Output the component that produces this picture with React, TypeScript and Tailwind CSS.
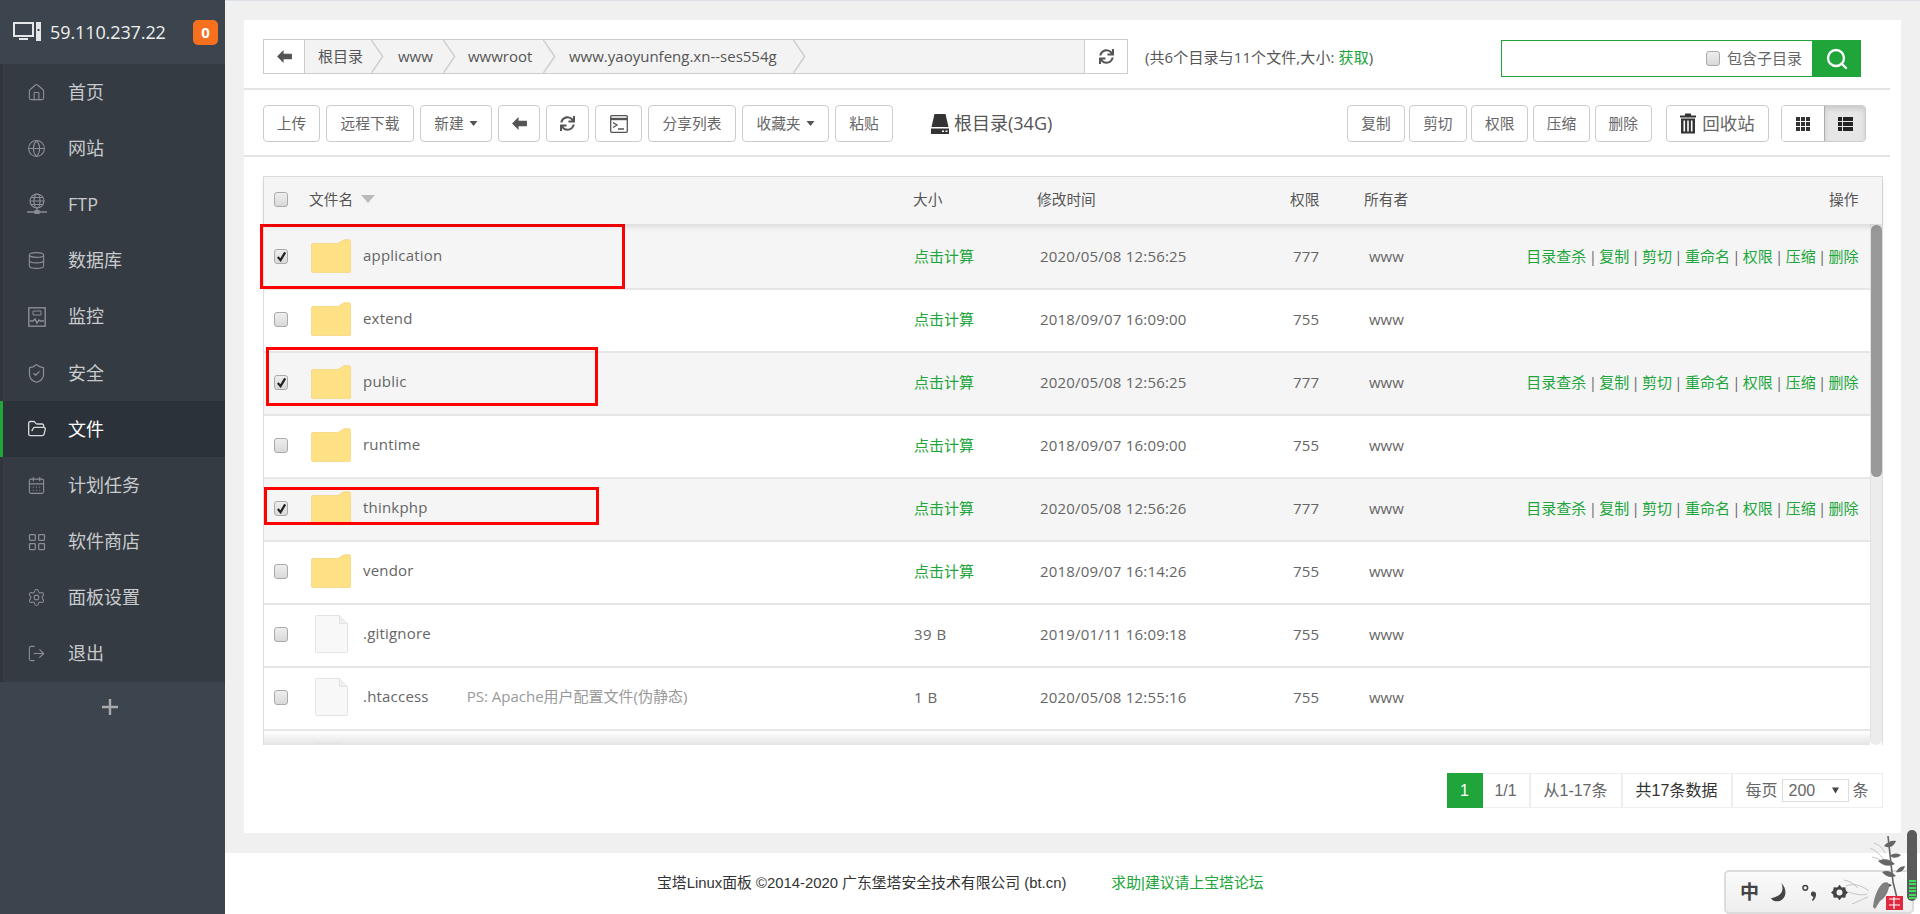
import React from "react";
import { House, Globe, Database, ShieldCheck, FolderOpen, CalendarDays, LayoutGrid, Settings, LogOut, Search } from "lucide-react";
import { FaSync } from "react-icons/fa";

const FONT = { fontFamily: '"Open Sans","Noto Sans CJK SC",sans-serif' };
const ARIAL = { fontFamily: '"Liberation Sans","Noto Sans CJK SC",sans-serif' };

function ArrowLeft({ className }: { className?: string }) {
  return (
    <svg viewBox="0 0 16 14" className={className} fill="#555">
      <path d="M0 7 7 0v4h9v6H7v4z" />
    </svg>
  );
}
function Caret() {
  return (
    <svg viewBox="0 0 8 5" className="w-[9px] h-[5px] ml-[5px]" fill="#555">
      <path d="M0 0h8L4 5z" />
    </svg>
  );
}
function Chevron() {
  return (
    <svg viewBox="0 0 13 35" className="w-[13px] h-[33px] shrink-0" fill="none" stroke="#cfcfcf" strokeWidth="1.6">
      <path d="M0 0 12 17.5 0 35" />
    </svg>
  );
}
function Check({ on }: { on?: boolean }) {
  return (
    <div className="w-[14px] h-[15px] rounded-[3px] border border-[#aaa] bg-gradient-to-b from-[#eee] to-[#d9d9d9] flex items-center justify-center shrink-0">
      {on && (
        <svg viewBox="0 0 12 12" className="w-[11px] h-[11px]" fill="none" stroke="#222" strokeWidth="2.4">
          <path d="M2 6.5 5 10 10 1.5" />
        </svg>
      )}
    </div>
  );
}
function Folder() {
  return (
    <svg viewBox="0 0 40 34" className="w-[40px] h-[34px]">
      <path d="M2 4.5h25L33 .8h5a1.6 1.6 0 0 1 1.6 1.6v29.6a1.6 1.6 0 0 1-1.6 1.6H2A1.6 1.6 0 0 1 .4 32V6a1.6 1.6 0 0 1 1.6-1.5z" fill="#fee085" stroke="#f5d47c" strokeWidth=".8" />
    </svg>
  );
}
function FileIcon() {
  return (
    <svg viewBox="0 0 33 38" className="w-[33px] h-[38px]">
      <path d="M1.5.5h23l8 8v28a1 1 0 0 1-1 1h-30a1 1 0 0 1-1-1v-35a1 1 0 0 1 1-1z" fill="#f8f8f8" stroke="#e3e3e3" />
      <path d="M24.5.5v8h8" fill="#efefef" stroke="#e3e3e3" />
    </svg>
  );
}
function FtpIcon() {
  return (
    <svg viewBox="0 0 20 22" className="w-[20px] h-[22px]" fill="none" stroke="#8a8f94" strokeWidth="1.2">
      <circle cx="10" cy="8" r="7" />
      <ellipse cx="10" cy="8" rx="3" ry="7" />
      <path d="M3 8h14M4 4.5h12M4 11.5h12M10 15v3" />
      <path d="M0 19h8M12 19h8" strokeWidth="1.6" />
      <rect x="8" y="17.6" width="4" height="2.8" fill="#8a8f94" />
    </svg>
  );
}
function MonitorIcon() {
  return (
    <svg viewBox="0 0 18 20" className="w-[18px] h-[20px]" fill="none" stroke="#8a8f94" strokeWidth="1.4">
      <rect x=".8" y=".8" width="16.4" height="18.4" />
      <path d="M2 14h3l2-2 2 4 2-3 1.5 1H16" />
      <path d="M5 4h8v4H5z" strokeWidth="1" />
    </svg>
  );
}

const nav: [string, React.ReactNode][] = [
  ["首页", <House size={19} strokeWidth={1.4} color="#8a8f94" />],
  ["网站", <Globe size={19} strokeWidth={1.3} color="#8a8f94" />],
  ["FTP", <FtpIcon />],
  ["数据库", <Database size={19} strokeWidth={1.4} color="#8a8f94" />],
  ["监控", <MonitorIcon />],
  ["安全", <ShieldCheck size={21} strokeWidth={1.4} color="#8a8f94" />],
  ["文件", <FolderOpen size={20} strokeWidth={1.6} color="#d8d8d8" />],
  ["计划任务", <CalendarDays size={19} strokeWidth={1.4} color="#8a8f94" />],
  ["软件商店", <LayoutGrid size={20} strokeWidth={1.5} color="#8a8f94" />],
  ["面板设置", <Settings size={19} strokeWidth={1.3} color="#8a8f94" />],
  ["退出", <LogOut size={19} strokeWidth={1.4} color="#8a8f94" />],
];

function Sidebar() {
  return (
    <aside className="w-[225px] shrink-0 h-full bg-[#3c444d] flex flex-col">
      <div className="h-[64px] flex items-center text-white pl-[13px]">
        <svg viewBox="0 0 28 22" className="w-[28px] h-[22px]" fill="#e4e6e8">
          <path d="M0 1h21v15H0zM2 3v11h17V3zM6 17h9v2H6zM23 1h5v19h-5zM24.5 8h2v2h-2z" fillRule="evenodd" />
        </svg>
        <span className="ml-[9px] text-[18px] tracking-[-0.1px] text-[#eee]">59.110.237.22</span>
        <span className="ml-auto mr-[7px] w-[25px] h-[25px] rounded-[5px] bg-[#f7701d] flex items-center justify-center font-bold text-[15px]">0</span>
      </div>
      <nav className="bg-[#343b43] h-[618px] flex flex-col">
        {nav.map(([label, icon]) => {
          const active = label === "文件";
          return (
            <div
              key={label}
              className={
                active
                  ? "h-[56.2px] flex items-center border-l-[3px] border-[#20a53a] bg-[#2c323a] text-white text-[18px]"
                  : "h-[56.2px] flex items-center border-l-[3px] border-[#2f353b] text-[#c8cacc] text-[18px]"
              }
            >
              <span className="w-[65px] flex justify-center pl-[22px] pr-[20px]">{icon}</span>
              <span>{label}</span>
            </div>
          );
        })}
      </nav>
      <div className="flex justify-center mt-[17px] pr-[6px] text-[#a0a4a8]">
        <svg viewBox="0 0 16 16" className="w-[16px] h-[16px]" fill="#aaa">
          <path d="M6.8 0h2.4v6.8H16v2.4H9.2V16H6.8V9.2H0V6.8h6.8z" />
        </svg>
      </div>
    </aside>
  );
}

const btn = "h-[37px] border border-[#ccc] rounded-[4px] bg-white flex items-center justify-center text-[14.7px] text-[#666] shrink-0";

function Breadcrumb() {
  return (
    <div className="w-[865px] h-[35px] border border-[#ccc] flex items-center bg-[#f3f3f3] text-[15px] text-[#555] whitespace-nowrap">
      <div className="w-[41px] h-full bg-white border-r border-[#ccc] flex items-center justify-center shrink-0">
        <ArrowLeft className="w-[15px] h-[13px]" />
      </div>
      <span className="ml-[13px] w-[45px]">根目录</span>
      <span className="ml-[8px]"><Chevron /></span>
      <span className="ml-[14px] w-[35px]">www</span>
      <span className="ml-[10px]"><Chevron /></span>
      <span className="ml-[12px] w-[66px]">wwwroot</span>
      <span className="ml-[9px]"><Chevron /></span>
      <span className="ml-[13px] w-[215px]">www.yaoyunfeng.xn--ses554g</span>
      <span className="ml-[9px]"><Chevron /></span>
      <div className="ml-auto w-[43px] h-full bg-white border-l border-[#ccc] flex items-center justify-center">
        <FaSync className="text-[#555] text-[15px]" />
      </div>
    </div>
  );
}

function SearchBox() {
  return (
    <div className="w-[360px] h-[37px] flex mt-[1px] ml-auto mr-[29px]">
      <div className="flex-1 border border-[#20a53a] flex items-center justify-end pr-[10px] text-[15px] text-[#666]">
        <Check />
        <span className="ml-[7px]">包含子目录</span>
      </div>
      <div className="w-[48px] bg-[#20a53a] flex items-center justify-center">
        <Search size={24} color="#fff" strokeWidth={2.3} />
      </div>
    </div>
  );
}

function Toolbar() {
  return (
    <div className="h-[67px] mr-[11px] border-b-2 border-[#e4e4e4] pl-[19px] pt-[15px] flex items-start gap-[6px]">
      <div className={`${btn} w-[57px]`}>上传</div>
      <div className={`${btn} w-[88px]`}>远程下载</div>
      <div className={`${btn} w-[72px]`}>新建<Caret /></div>
      <div className={`${btn} w-[42px]`}><ArrowLeft className="w-[15px] h-[13px]" /></div>
      <div className={`${btn} w-[43px]`}><FaSync className="text-[#555] text-[15px]" /></div>
      <div className={`${btn} w-[47px]`}>
        <svg viewBox="0 0 18 18" className="w-[18px] h-[18px]" fill="none" stroke="#555" strokeWidth="1.3">
          <rect x=".7" y=".7" width="16.6" height="16.6" rx="1" />
          <path d="M1 4h16" strokeWidth="2.4" />
          <path d="M3 7.5 7 10l-4 2.5M8 14h6" />
        </svg>
      </div>
      <div className={`${btn} w-[88px]`}>分享列表</div>
      <div className={`${btn} w-[87px]`}>收藏夹<Caret /></div>
      <div className={`${btn} w-[58px]`}>粘贴</div>
      <div className="ml-[32px] h-[37px] flex items-center text-[18px] text-[#555] whitespace-nowrap">
        <svg viewBox="0 0 18 20" className="w-[18px] h-[20px]" fill="#333">
          <path d="M3.5 0h11l3 13H.5zM0 14.5h18V20H0zM11 16.5v1.5h2v-1.5zM14.5 16.5v1.5h2v-1.5z" fillRule="evenodd" />
        </svg>
        <span className="ml-[5px]">根目录(34G)</span>
      </div>
      <div className="ml-auto flex items-start gap-[4.3px]">
        {["复制", "剪切", "权限", "压缩", "删除"].map((t) => (
          <div key={t} className={`${btn} w-[57.5px]`}>{t}</div>
        ))}
      </div>
      <div className={`${btn} ml-[8px] w-[103px] text-[17.5px] text-[#444]`}>
        <svg viewBox="0 0 16 20" className="w-[16px] h-[21px]" fill="#333">
          <path d="M5 0h6v2h5v2H0V2h5zM1 5h14v15H1zM3.5 7v11h1.6V7zM7.2 7v11h1.6V7zM10.9 7v11h1.6V7z" fillRule="evenodd" />
        </svg>
        <span className="ml-[6px]">回收站</span>
      </div>
      <div className="ml-[6px] mr-[24px] h-[37px] flex border border-[#ccc] rounded-[4px] overflow-hidden shrink-0">
        <div className="w-[42px] flex items-center justify-center bg-white">
          <svg viewBox="0 0 14 14" className="w-[14px] h-[14px]" fill="#333">
            {[0, 5, 10].flatMap((y) => [0, 5, 10].map((x) => <rect key={`${x}-${y}`} x={x} y={y} width="4" height="4" />))}
          </svg>
        </div>
        <div className="w-[41px] flex items-center justify-center bg-[#e6e6e6] border-l border-[#adadad] shadow-[inset_0_3px_5px_rgba(0,0,0,0.125)]">
          <svg viewBox="0 0 15 14" className="w-[15px] h-[14px]" fill="#222">
            {[0, 5, 10].flatMap((y) => [<rect key={`a${y}`} x="0" y={y} width="4" height="4" />, <rect key={`b${y}`} x="5" y={y} width="10" height="4" />])}
          </svg>
        </div>
      </div>
    </div>
  );
}

type Row = { n: string; s?: string; d: string; p: string; f?: boolean; c?: boolean; ps?: string };
const rows: Row[] = [
  { n: "application", d: "2020/05/08 12:56:25", p: "777", f: true, c: true },
  { n: "extend", d: "2018/09/07 16:09:00", p: "755", f: true },
  { n: "public", d: "2020/05/08 12:56:25", p: "777", f: true, c: true },
  { n: "runtime", d: "2018/09/07 16:09:00", p: "755", f: true },
  { n: "thinkphp", d: "2020/05/08 12:56:26", p: "777", f: true, c: true },
  { n: "vendor", d: "2018/09/07 16:14:26", p: "755", f: true },
  { n: ".gitignore", s: "39 B", d: "2019/01/11 16:09:18", p: "755" },
  { n: ".htaccess", s: "1 B", d: "2020/05/08 12:55:16", p: "755", ps: "PS: Apache用户配置文件(伪静态)" },
];
const actions = ["目录查杀", "复制", "剪切", "重命名", "权限", "压缩", "删除"];
const cols = "grid grid-cols-[47px_52px_551px_126px_253px_76px_100px_1fr] items-center";

function FileRow({ r }: { r: Row }) {
  return (
    <div className={`${cols} h-[63px] pb-[2px] border-b-2 border-[#e6e6e6] text-[15px] tracking-[0.2px] text-[#666] ${r.c ? "bg-[#f5f5f5]" : "bg-white"}`}>
      <div className="pl-[10px]"><Check on={r.c} /></div>
      <div className={r.f ? "flex -mt-[2px]" : "flex pl-[4px] -mt-[2px]"}>{r.f ? <Folder /> : <FileIcon />}</div>
      <div className="flex items-center -mt-[3px]">
        <span>{r.n}</span>
        {r.ps && <span className="ml-[38px] text-[#999] tracking-normal text-[15px]">{r.ps}</span>}
      </div>
      <div className={r.s ? "tracking-[0.5px]" : "text-[#20a53a] text-[15px] tracking-normal"}>{r.s ?? "点击计算"}</div>
      <div>{r.d}</div>
      <div>{r.p}</div>
      <div className="tracking-normal">www</div>
      <div className="flex justify-end pr-[11px] text-[15px] tracking-normal text-[#20a53a] whitespace-nowrap">
        {r.p === "777" &&
          actions.map((a, i) => (
            <span key={a}>
              {i > 0 && <span className="text-[#666] mx-[2.3px]">|</span>}
              {a}
            </span>
          ))}
      </div>
    </div>
  );
}

function Table() {
  return (
    <div className="ml-[19px] w-[1619.5px] h-[569px] border border-b-0 border-[#ddd] flex flex-col">
      <div className="relative z-10 h-[47px] shrink-0 bg-[#f5f5f5] shadow-[0_3px_5px_rgba(0,0,0,0.1)] flex items-center pb-[2px] text-[14.7px] text-[#555]">
        <div className="w-[10px]" />
        <Check />
        <span className="ml-[21px] w-[52px]">文件名</span>
        <svg viewBox="0 0 14 8" className="w-[14px] h-[8px] mt-[-1px]" fill="#bbb"><path d="M0 0h14L7 8z" /></svg>
        <span className="ml-[538px] w-[124px]">大小</span>
        <span className="w-[253px]">修改时间</span>
        <span className="w-[74px]">权限</span>
        <span>所有者</span>
        <span className="ml-auto mr-[23px]">操作</span>
      </div>
      <div className="relative flex-1 flex min-h-0 overflow-hidden">
        <div className="flex-1 overflow-hidden bg-[#f5f5f5] pt-[3px]">
          {rows.map((r) => <FileRow key={r.n} r={r} />)}
          <div className="h-[63px] pl-[51px] pt-[11px] bg-white"><FileIcon /></div>
        </div>
        <div className="w-[12px] shrink-0 bg-[#ececec] border-l border-[#e2e2e2] rounded-b-[6px] overflow-hidden">
          <div className="h-[252px] bg-[#999] rounded-[6px] mt-[1px]" />
        </div>
        <div className="absolute left-0 right-[12px] bottom-0 h-[14px] bg-gradient-to-b from-[#ffffff00] to-[#e4e4e4]" />
      </div>
    </div>
  );
}

function Pagination() {
  const cell = "h-full flex items-center justify-center border-r-2 border-[#eee]";
  return (
    <div className="mr-[18.5px] mt-[28px] ml-auto w-fit h-[35px] flex text-[16px] text-[#666] whitespace-nowrap" style={ARIAL}>
      <div className="w-[36px] h-full bg-[#20a53a] text-white flex items-center justify-center">1</div>
      <div className="flex border border-l-0 border-[#eee] h-full">
        <div className={`${cell} w-[48px]`}>1/1</div>
        <div className={`${cell} w-[92px]`}>从1-17条</div>
        <div className={`${cell} w-[110px] text-[#333]`}>共17条数据</div>
        <div className="w-[149px] h-full flex items-center pl-[13px]">
          <span>每页</span>
          <div className="ml-[4px] w-[67px] h-[23px] border border-[#ddd] flex items-center pl-[6px] text-[#666]">
            200
            <svg viewBox="0 0 8 7" className="ml-auto mr-[9px] w-[7px] h-[7px]" fill="#444"><path d="M0 0h8L4 7z" /></svg>
          </div>
          <span className="ml-[4px]">条</span>
        </div>
      </div>
    </div>
  );
}

function ImeWidget() {
  return (
    <div className="absolute left-[1724px] top-[830px] w-[196px] h-[84px] pointer-events-none">
      <div className="absolute left-0 top-[40px] w-[190px] h-[44px] rounded-[5px] border-2 border-[#dcdcdc] bg-gradient-to-b from-[#fafafa] to-[#eeeeee] flex items-center pl-[14px] text-[#444]">
        <span className="text-[19px] font-bold leading-none">中</span>
        <svg viewBox="0 0 18 20" className="ml-[11px] w-[17px] h-[19px]" fill="#444"><path d="M12 0c3 7 1 14-11 16 2 3 6 4 9 3 7-2 9-12 2-19z" /></svg>
        <svg viewBox="0 0 16 20" className="ml-[15px] w-[15px] h-[19px]" fill="#444">
          <circle cx="3.5" cy="5" r="2.5" fill="none" stroke="#444" strokeWidth="1.6" />
          <path d="M11 9a3 3 0 0 1 4 3c0 3-2 6-3.5 7l-1-1c1-1 1.5-2 1.5-3.4A3 3 0 0 1 11 9z" />
        </svg>
        <svg viewBox="0 0 20 20" className="ml-[14px] w-[17px] h-[17px]" fill="#444">
          <path d="M10 1l2.6 3.2 4.2-.5.7 4 2.5 2.3-2.5 2.3-.7 4-4.2-.5L10 19l-2.6-3.2-4.2.5-.7-4L0 10l2.5-2.3.7-4 4.2.5zM10 6.5a3.5 3.5 0 1 0 0 7 3.5 3.5 0 0 0 0-7z" fillRule="evenodd" />
        </svg>
      </div>
      <svg viewBox="0 0 196 84" className="absolute left-0 top-0 w-[196px] h-[84px]">
        <g stroke="#c4c4c4" strokeWidth="1" fill="none">
          <path d="M122 56c8-3 15-1 23 5M124 62c7 2 13 4 19 2M128 74c6-2 10-5 16-7M120 50c6 1 10 4 14 8" />
          <path d="M146 18c7 3 11 8 15 13M150 13c6 2 8 5 11 10M148 27c5 1 9 3 12 6" />
        </g>
        <path d="M160 16c3-4 8-6 12-5-2 5-6 8-12 5zM154 31c6-3 12-2 17 3-6 3-12 2-17-3zM158 42c5-2 9-1 14 4-5 2-10 1-14-4zM166 26c3-3 7-3 11-1-3 3-7 4-11 1zM172 42c2-4 5-6 9-6-1 4-4 7-9 6z" fill="#666" />
        <path d="M164 6l5 46 6 24" stroke="#666" strokeWidth="1.6" fill="none" />
        <path d="M149 77c1-10 5-20 10-24 4-2 7 0 6 4-1 6-5 12-9 14l-5 8z" fill="#808080" />
        <path d="M165 54l3 1-3 2z" fill="#444" />
        <rect x="162" y="66" width="17" height="14" fill="#e0293e" />
        <path d="M165 69h11M170 67v12M165 75h11" stroke="#fff" strokeWidth="1.2" />
      </svg>
      <div className="absolute left-[183px] top-0 w-[10px] h-[71px] rounded-[5px] bg-[#5a5a5a] flex flex-col justify-end gap-[1.5px] px-[1.5px] pb-[2px]">
        {[0, 1, 2, 3, 4, 5].map((i) => <div key={i} className="h-[2px] bg-[#3ddc5a]" />)}
      </div>
    </div>
  );
}

export default function App() {
  return (
    <div className="relative w-[1920px] h-[914px] overflow-hidden bg-white flex" style={FONT}>
      <Sidebar />
      <main className="flex-1 min-w-0 flex flex-col">
        <div className="h-[853px] bg-[#f0f0f0] border-t border-[#dcdfe6] pt-[19px] px-[19px]">
          <div className="h-[813px] bg-white">
            <div className="h-[70px] mr-[11px] border-b-2 border-[#e4e4e4] pl-[19px] pt-[19px] flex items-start">
              <Breadcrumb />
              <div className="ml-[17px] mt-[7px] text-[15px] tracking-[0.1px] text-[#555] whitespace-nowrap">
                (共6个目录与11个文件,大小: <span className="text-[#20a53a]">获取</span>)
              </div>
              <SearchBox />
            </div>
            <Toolbar />
            <div className="h-[19px]" />
            <Table />
            <Pagination />
          </div>
        </div>
        <div className="flex-1 flex items-center pl-[432px] text-[14.85px] text-[#333] whitespace-nowrap" style={ARIAL}>
          <span>宝塔Linux面板 ©2014-2020 广东堡塔安全技术有限公司 (bt.cn)</span>
          <span className="ml-[45px] text-[#20a53a]">求助|建议请上宝塔论坛</span>
        </div>
      </main>
      {/* annotation boxes drawn over the page */}
      <div className="absolute left-[260px] top-[224px] w-[365px] h-[65px] border-[3px] border-[#f00] pointer-events-none" />
      <div className="absolute left-[266px] top-[347px] w-[332px] h-[59px] border-[3px] border-[#f00] pointer-events-none" />
      <div className="absolute left-[264px] top-[487px] w-[335px] h-[38px] border-[3px] border-[#f00] pointer-events-none" />
      <ImeWidget />
    </div>
  );
}
